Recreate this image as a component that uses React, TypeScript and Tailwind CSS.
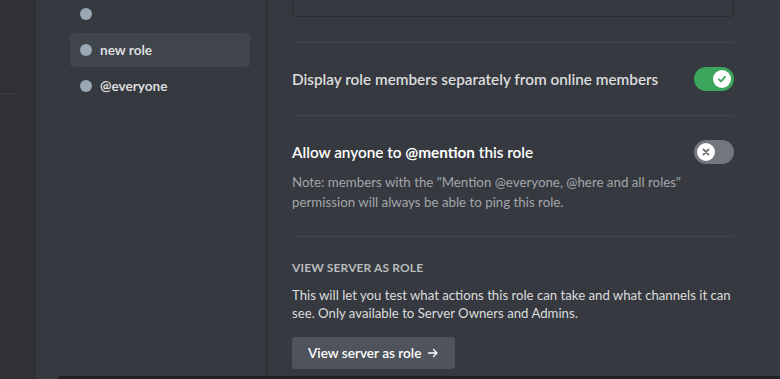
import React from "react";

const font = { fontFamily: "Lato, 'Noto Sans', sans-serif" };

function Dot() {
  return <span className="w-[12px] h-[12px] rounded-full bg-[#99aab5] shrink-0" />;
}

function RoleRow({ label, active }: { label: string; active?: boolean }) {
  return (
    <div
      className={`h-[34px] flex items-center gap-[8px] pl-[10px] rounded-[4px] ${
        active ? "bg-[#40444b]" : ""
      }`}
    >
      <Dot />
      <span className="text-[13.6px] font-bold text-[#dcddde] leading-[18px]">{label}</span>
    </div>
  );
}

function ToggleOn() {
  return (
    <div className="w-[40px] h-[24px] rounded-full bg-[#3ba55c] flex items-center justify-end pr-[3px] shrink-0">
      <div className="w-[18px] h-[18px] rounded-full bg-white flex items-center justify-center">
        <svg width="12" height="12" viewBox="0 0 20 20">
          <path d="M5 10.5 L8.5 14 L15 6.5" stroke="#3ba55c" strokeWidth="3" fill="none" strokeLinecap="round" strokeLinejoin="round" />
        </svg>
      </div>
    </div>
  );
}

function ToggleOff() {
  return (
    <div className="w-[40px] h-[24px] rounded-full bg-[#72767d] flex items-center justify-start pl-[3px] shrink-0">
      <div className="w-[18px] h-[18px] rounded-full bg-white flex items-center justify-center">
        <svg width="10" height="10" viewBox="0 0 20 20">
          <path d="M5 5 L15 15 M15 5 L5 15" stroke="#72767d" strokeWidth="3.6" fill="none" strokeLinecap="round" />
        </svg>
      </div>
    </div>
  );
}

export default function App() {
  return (
    <div className="w-[780px] h-[379px] overflow-hidden flex flex-col bg-[#36393f]" style={font}>
      <div className="flex flex-1 min-h-0">
        {/* far left settings strip */}
        <div className="w-[36px] bg-[#2f3136] shrink-0">
          <div className="mt-[93px] h-[1px] w-[15px] bg-[#3b3e44]" />
        </div>
        {/* roles list */}
        <div className="w-[232px] shrink-0 bg-[#36393f] border-r-[2px] border-[#303236] pl-[34px] pr-[16px]">
          <div className="-mt-[3px] flex flex-col gap-[2px]">
            <RoleRow label="" />
            <RoleRow label="new role" active />
            <RoleRow label="@everyone" />
          </div>
        </div>
        {/* content */}
        <div className="flex-1 pl-[24px]">
          <div className="w-[442px]">
            <div className="-mt-[23px] h-[40px] rounded-[4px] border border-[#2b2d31] bg-[#36393f]" />
            <div className="mt-[25px] h-[1px] bg-[#42454a]" />
            <div className="py-[24px] flex items-center justify-between">
              <span className="text-[15.3px] font-semibold text-[#dcddde] leading-[20px] whitespace-nowrap">
                Display role members separately from online members
              </span>
              <ToggleOn />
            </div>
            <div className="h-[1px] bg-[#42454a]" />
            <div className="pt-[24px] pb-[24px]">
              <div className="flex items-center justify-between h-[24px]">
                <span className="text-[15.3px] font-semibold text-[#ffffff] leading-[20px] whitespace-nowrap">
                  Allow anyone to <span className="font-bold">@mention</span> this role
                </span>
                <ToggleOff />
              </div>
              <p className="mt-[8px] text-[13.3px] leading-[20px] text-[#a3a6aa] whitespace-nowrap">
                Note: members with the "Mention @everyone, @here and all roles"
                <br />
                permission will always be able to ping this role.
              </p>
            </div>
            <div className="h-[1px] bg-[#42454a]" />
            <div className="pt-[23px]">
              <div className="text-[12px] leading-[16px] font-bold uppercase text-[#b9bbbe] tracking-[0.01em]">
                View server as role
              </div>
              <p className="mt-[10px] text-[13.2px] leading-[18px] text-[#dcddde] whitespace-nowrap">
                This will let you test what actions this role can take and what channels it can
                <br />
                see. Only available to Server Owners and Admins.
              </p>
              <button className="mt-[15px] h-[32px] px-[16px] rounded-[3px] bg-[#4f545c] text-white text-[13.6px] font-semibold flex items-center gap-[6px]">
                View server as role
                <svg width="12" height="12" viewBox="0 0 24 24">
                  <path d="M3 12 H20 M13 5 L20 12 L13 19" stroke="white" strokeWidth="2.6" fill="none" strokeLinecap="round" strokeLinejoin="round" />
                </svg>
              </button>
            </div>
          </div>
        </div>
      </div>
      <div className="h-[3px] flex shrink-0">
        <div className="w-[36px] bg-[#2f3136]" />
        <div className="w-[22px] bg-[#36393f]" />
        <div className="flex-1 bg-[#202225]" />
      </div>
    </div>
  );
}
